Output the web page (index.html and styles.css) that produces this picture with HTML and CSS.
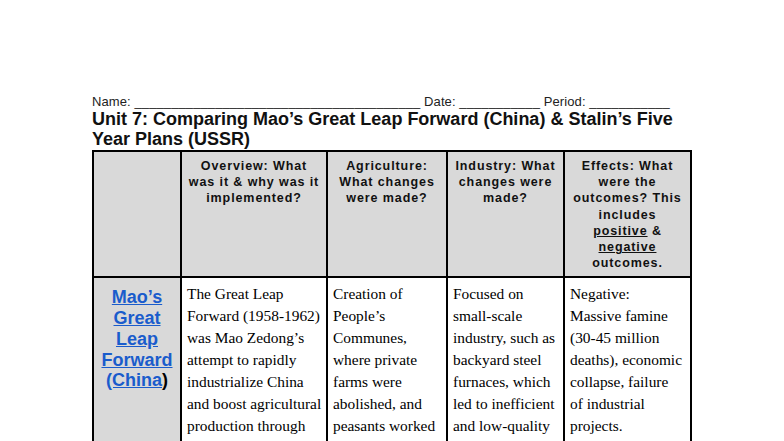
FILE: index.html
```html
<!DOCTYPE html>
<html>
<head>
<meta charset="utf-8">
<link rel="stylesheet" href="styles.css">
</head>
<body>
<div class="page">
  <div class="nameline">Name: _______________________________________ Date: ___________ Period: ___________</div>
  <h1 class="title">Unit 7: Comparing Mao’s Great Leap Forward (China) &amp; Stalin’s Five Year Plans (USSR)</h1>
  <table class="grid">
    <colgroup>
      <col class="c1"><col class="c2"><col class="c3"><col class="c4"><col class="c5">
    </colgroup>
    <tr class="head">
      <th></th>
      <th>Overview: What was it &amp; why was it implemented?</th>
      <th>Agriculture: What changes were made?</th>
      <th>Industry: What changes were made?</th>
      <th>Effects: What were the outcomes? This includes <u>positive</u> &amp; <u>negative</u> outcomes.</th>
    </tr>
    <tr class="body">
      <th class="rowhead"><a href="#">Mao’s Great Leap Forward (China</a>)</th>
      <td>The Great Leap Forward (1958-1962) was Mao Zedong’s attempt to rapidly industrialize China and boost agricultural production through collectivization. It aimed to transform China into a socialist society.</td>
      <td>Creation of People’s Communes, where private farms were abolished, and peasants worked collectively. Grain production targets were set unrealistically high.</td>
      <td>Focused on small-scale industry, such as backyard steel furnaces, which led to inefficient and low-quality steel production. Infrastructure projects were poorly planned.</td>
      <td class="last">Negative:<br>Massive famine (30-45 million deaths), economic collapse, failure of industrial projects.<br>Positive: Some long-term infrastructure gains.</td>
    </tr>
  </table>
</div>
</body>
</html>
```
FILE: styles.css
```css
html, body {
  margin: 0;
  padding: 0;
  background: #ffffff;
}
.page {
  padding: 94px 0 0 92px;
  width: 600px;
  font-family: "Liberation Sans", Arial, sans-serif;
  color: #000;
}
.nameline {
  font-size: 13px;
  line-height: 15px;
  color: #222;
  white-space: nowrap;
  letter-spacing: 0.1px;
}
.title {
  margin: 0;
  font-size: 18px;
  line-height: 20px;
  font-weight: bold;
  width: 600px;
  color: #111;
}
.grid {
  border-collapse: collapse;
  table-layout: fixed;
  width: 600px;
  margin-top: 1px;
}
.c1 { width: 88px; }
.c2 { width: 146px; }
.c3 { width: 120px; }
.c4 { width: 117px; }
.c5 { width: 127px; }
.grid th, .grid td {
  border: 2px solid #000;
  vertical-align: top;
  padding: 5px 5px;
}
.head th {
  background: #d9d9d9;
  height: 109px;
  padding-top: 6px;
  font-size: 12.5px;
  line-height: 16.2px;
  font-weight: bold;
  letter-spacing: 0.9px;
  text-align: center;
  color: #111;
}
.rowhead {
  background: #d9d9d9;
  text-align: center;
  font-size: 18px;
  line-height: 20.7px;
  font-weight: bold;
}
.grid .rowhead {
  padding-top: 9px;
}
.rowhead a {
  color: #1a5ccc;
  text-decoration: underline;
}
.body td {
  font-family: "Liberation Serif", "Times New Roman", serif;
  font-size: 15.4px;
  line-height: 22px;
  text-align: left;
  background: #fff;
  padding-top: 5px;
  padding-left: 5px;
  padding-right: 4px;
}
.body td.last {
  padding-right: 7px;
}
```
